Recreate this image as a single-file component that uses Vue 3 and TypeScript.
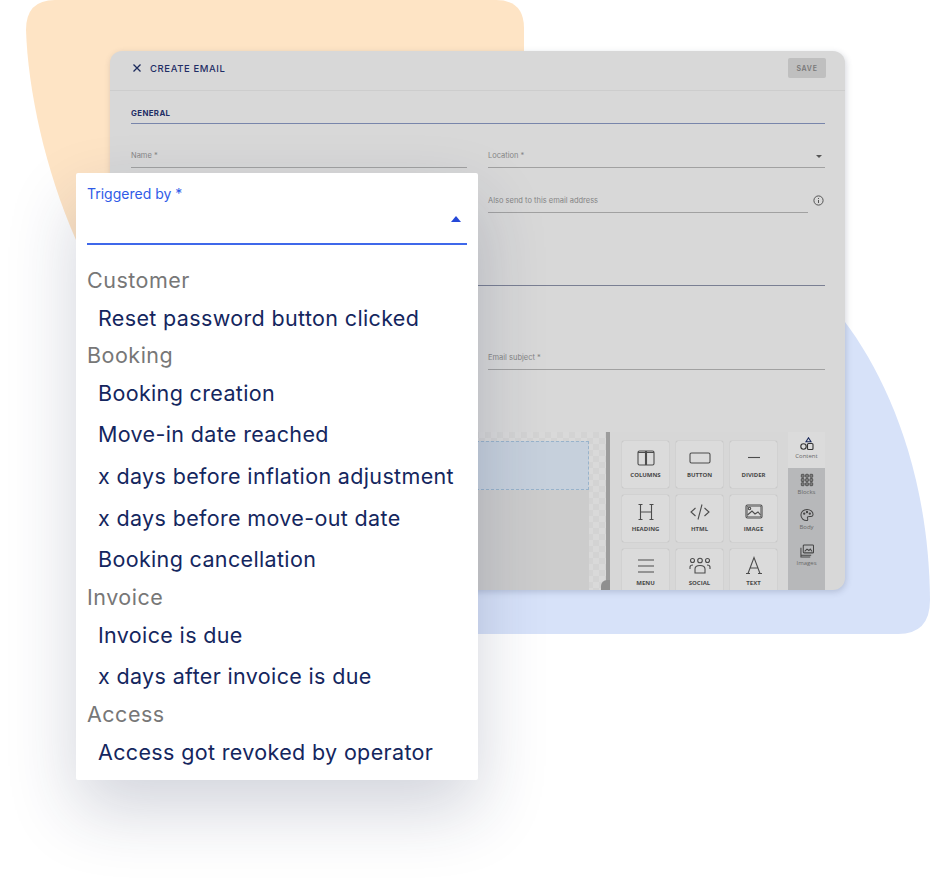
<script setup lang="ts">
const groups = [
  { name: 'Customer', items: ['Reset password button clicked'] },
  { name: 'Booking', items: ['Booking creation', 'Move-in date reached', 'x days before inflation adjustment', 'x days before move-out date', 'Booking cancellation'] },
  { name: 'Invoice', items: ['Invoice is due', 'x days after invoice is due'] },
  { name: 'Access', items: ['Access got revoked by operator'] },
]
const tools = [
  { label: 'COLUMNS', icon: 'columns' }, { label: 'BUTTON', icon: 'button' }, { label: 'DIVIDER', icon: 'divider' },
  { label: 'HEADING', icon: 'heading' }, { label: 'HTML', icon: 'html' }, { label: 'IMAGE', icon: 'image' },
  { label: 'MENU', icon: 'menu' }, { label: 'SOCIAL', icon: 'social' }, { label: 'TEXT', icon: 'text' },
]
</script>

<template>
  <div class="canvas">
    <svg class="blob" width="930" height="879" viewBox="0 0 930 879" aria-hidden="true">
      <path d="M55 0H496Q524 0 524 28V240H76C45 170 28 90 26 30Q26 0 55 0Z" fill="#FEE4C5" />
      <path d="M845 322C885 375 929 470 930 600Q930 634 898 634H470V322Z" fill="#D7E2F9" />
    </svg>

    <section class="window">
      <header class="topbar">
        <div class="title">
          <svg width="10" height="10" viewBox="0 0 10 10"><path d="M1.500 1.500L8.500 8.500M8.500 1.500L1.500 8.500" stroke="#1b2a5c" stroke-width="1.300" fill="none" /></svg>
          <span>CREATE EMAIL</span>
        </div>
        <button class="save">SAVE</button>
      </header>
      <div class="form">
        <div class="tab">GENERAL</div>
        <div class="row row-one">
          <div class="field"><span>Name *</span></div>
          <div class="field"><span>Location *</span><i class="caret"></i></div>
        </div>
        <div class="row row-two">
          <div></div>
          <div class="with-info">
            <div class="field grow"><span>Also send to this email address</span></div>
            <svg class="info" width="11" height="11" viewBox="0 0 11 11"><circle cx="5.500" cy="5.500" r="4.600" fill="none" stroke="#555" /><path d="M5.500 5V8M5.500 3V4" stroke="#555" /></svg>
          </div>
        </div>
        <div class="dark-rule"></div>
        <div class="row row-three">
          <div></div>
          <div class="field"><span>Email subject *</span></div>
        </div>
        <div class="editor">
          <div class="stage">
            <div class="page">
              <div class="selected"></div>
            </div>
          </div>
          <div class="splitter"><i class="grip"></i></div>
          <div class="tools">
            <div v-for="t in tools" :key="t.label" class="tool">
              <svg width="26" height="24" viewBox="0 0 26 24" fill="none" stroke="#4c4c4c" stroke-width="1.100">
                <template v-if="t.icon === 'columns'"><rect x="5" y="5" width="16" height="14" rx="1.500" /><path d="M12.500 5V19M13.500 5V19M5 6.500H21" /></template>
                <template v-else-if="t.icon === 'button'"><rect x="3" y="7" width="20" height="10" rx="1.500" /></template>
                <path v-else-if="t.icon === 'divider'" d="M7 11.500H19" />
                <path v-else-if="t.icon === 'heading'" d="M7.500 4.500V19.500M18.500 4.500V19.500M7.500 12H18.500M5.500 4.500H9.500M16.500 4.500H20.500M5.500 19.500H9.500M16.500 19.500H20.500" />
                <path v-else-if="t.icon === 'html'" d="M8.500 8L4 12L8.500 16M17.500 8L22 12L17.500 16M15 4.500L11 19.500" />
                <template v-else-if="t.icon === 'image'"><rect x="5" y="5" width="16" height="13" rx="1.500" /><rect x="6.200" y="6.200" width="13.600" height="10.600" stroke-width=".6" /><circle cx="8.500" cy="8.500" r="1.200" /><path d="M6.500 15L11 11L14 14L17 12L19.500 15" /></template>
                <path v-else-if="t.icon === 'menu'" d="M5 6H21M5 12H21M5 18H21" />
                <template v-else-if="t.icon === 'social'"><circle cx="13" cy="6.500" r="2.300" /><circle cx="5.500" cy="6.500" r="2" /><circle cx="20.500" cy="6.500" r="2" /><path d="M8 19V15Q8 11.500 13 11.500Q18 11.500 18 15V19ZM3 15V13Q3 11 6 11M23 15V13Q23 11 20 11" /></template>
                <path v-else d="M7 19.500L13 3.500L19 19.500M9 14H17M5 19.500H9M17 19.500H21" />
              </svg>
              <b>{{ t.label }}</b>
            </div>
          </div>
          <aside class="rail">
            <div class="rail-item current">
              <svg width="14" height="14" viewBox="0 0 14 14" fill="none" stroke="#333" stroke-width="1.100"><path d="M8.500 .8L11 4.800H6Z" stroke="#1b2a5c" /><circle cx="3.500" cy="9.500" r="2.700" /><rect x="7.500" y="6.500" width="5.500" height="6" rx="1" /></svg>
              <span>Content</span>
            </div>
            <div class="rail-item">
              <svg width="14" height="14" viewBox="0 0 14 14" fill="#808080" stroke="#3a3a3a" stroke-width=".7"><rect x="1.300" y="1.300" width="2.800" height="3" rx=".6" /><rect x="5.600" y="1.300" width="2.800" height="3" rx=".6" /><rect x="9.900" y="1.300" width="2.800" height="3" rx=".6" /><rect x="1.300" y="5.500" width="2.800" height="3" rx=".6" /><rect x="5.600" y="5.500" width="2.800" height="3" rx=".6" /><rect x="9.900" y="5.500" width="2.800" height="3" rx=".6" /><rect x="1.300" y="9.700" width="2.800" height="3" rx=".6" /><rect x="5.600" y="9.700" width="2.800" height="3" rx=".6" /><rect x="9.900" y="9.700" width="2.800" height="3" rx=".6" /></svg>
              <span>Blocks</span>
            </div>
            <div class="rail-item">
              <svg width="14" height="14" viewBox="0 0 15 15" fill="none" stroke="#444" stroke-width="1.100"><path d="M7.500 1.500C3.500 1.500 1 4.500 1 7.500C1 11 4 13.500 7 13.500C8.500 13.500 8.500 12 8 11C7.500 9.800 8.500 9 10 9H12C13.500 9 14 8 14 7C14 4 11 1.500 7.500 1.500Z" /><circle cx="4.500" cy="6" r=".7" /><circle cx="7.500" cy="4.300" r=".7" /><circle cx="10.500" cy="6" r=".7" /></svg>
              <span>Body</span>
            </div>
            <div class="rail-item">
              <svg width="14" height="14" viewBox="0 0 15 15" fill="none" stroke="#444" stroke-width="1.100"><rect x="3.500" y="1" width="11" height="8.500" rx="1" /><path d="M1 4V11.500Q1 12 1.500 12H12M1 6.500V14H11M5 8L7.500 5.500L9.500 7L11 5.500L13 8" /></svg>
              <span>Images</span>
            </div>
          </aside>
        </div>
      </div>
    </section>

    <section class="dropdown">
      <div class="control">
        <label>Triggered by *</label>
        <i class="up"></i>
      </div>
      <div class="list">
        <template v-for="g in groups" :key="g.name">
          <div class="group">{{ g.name }}</div>
          <div v-for="item in g.items" :key="item" class="item">{{ item }}</div>
        </template>
      </div>
    </section>
  </div>
</template>

<style scoped>
.canvas { position: relative; width: 930px; height: 879px; overflow: hidden; background: #fff; font-family: "Inter", "Liberation Sans", sans-serif; }
.blob { position: absolute; left: 0; top: 0; }
.window { position: absolute; left: 110px; top: 51px; width: 735px; height: 539px; display: flex; flex-direction: column; overflow: hidden; border-radius: 12px; background: #d8d8d8; box-shadow: 1px 2px 6px rgba(60, 70, 100, .22); }
.topbar { height: 40px; box-sizing: border-box; flex: none; display: flex; align-items: center; justify-content: space-between; padding: 0 19px 5px 22px; border-bottom: 1px solid #cdcdcd; }
.title { display: flex; align-items: center; gap: 8px; color: #1f2e66; font: 500 9.500px "Inter", sans-serif; letter-spacing: .6px; }
.save { width: 38px; height: 20px; padding: 0; border: 0; border-radius: 2px; background: #bfbfbf; color: #787878; font: 600 7px "Inter", sans-serif; letter-spacing: .7px; }
.form { flex: 1; min-height: 0; display: flex; flex-direction: column; padding: 0 20px 0 21px; }
.tab { height: 33px; flex: none; padding-top: 16px; box-sizing: border-box; border-bottom: 1px solid #7885ab; color: #1f2e66; font: 700 7.800px/12px "Inter", sans-serif; letter-spacing: .4px; }
.row { display: grid; grid-template-columns: 336px 337px; gap: 21px; flex: none; }
.row-one { height: 44px; align-items: end; }
.row-two { height: 45px; align-items: end; }
.field { position: relative; height: 20px; box-sizing: border-box; border-bottom: 1px solid #a1a1a1; color: #858585; font-size: 7.500px; line-height: 12px; padding-top: 2px; }
.caret { position: absolute; right: 3px; top: 7px; border: 3px solid transparent; border-top: 3px solid #555; }
.with-info { display: flex; align-items: flex-end; gap: 5px; }
.info { margin: 0 1px 7px 0; }
.grow { flex: 1; }
.dark-rule { height: 73px; flex: none; box-sizing: border-box; border-bottom: 1px solid #7a7f93; }
.row-three { height: 146px; align-items: start; }
.row-three .field { margin-top: 64px; }
.editor { flex: 1; min-height: 0; display: flex; overflow: hidden; }
.stage { flex: 1; display: flex; flex-direction: column; padding: 9px 17px 0 0; background: repeating-conic-gradient(#d3d3d3 0 25%, #d9d9d9 0 50%) 0 0 / 12px 12px; }
.page { flex: 1; background: #cccccc; }
.selected { height: 49px; box-sizing: border-box; background: #c6d0dc; border: 1px dashed #98b3cb; }
.splitter { position: relative; width: 4px; flex: none; background: #9c9c9c; }
.grip { position: absolute; right: 0; bottom: 0; width: 9px; height: 10px; border-radius: 6px 0 0 0; background: #8f8f8f; }
.tools { width: 178px; flex: none; display: grid; grid-template-columns: repeat(3, 47px); grid-auto-rows: 47px; gap: 7px; padding: 9px 0 0 12px; box-sizing: border-box; background: #d7d7d7; }
.tool { box-sizing: border-box; display: flex; flex-direction: column; align-items: center; padding-top: 5px; gap: 1px; border-radius: 2px; background: #dbdbdb; box-shadow: 0 0 1px rgba(0, 0, 0, .3); }
.tool b { color: #484848; font: 700 6px/9px "Open Sans", sans-serif; }
.rail { width: 37px; flex: none; display: flex; flex-direction: column; background: #b7b8ba; color: #686868; font: 6px/8px "Open Sans", sans-serif; }
.rail-item { height: 35.600px; flex: none; box-sizing: border-box; padding-top: 5px; display: flex; flex-direction: column; align-items: center; gap: 1px; }
.current { background: #dbdbdb; }
.dropdown { position: absolute; left: 76px; top: 173px; width: 402px; height: 607px; border-radius: 2px; background: #fff; box-shadow: 0 30px 70px rgba(30, 40, 80, .2); }
.control { position: relative; height: 72px; margin: 0 11px; border-bottom: 2px solid #3f68ea; box-sizing: border-box; }
.control label { display: block; padding-top: 12px; color: #2f5be7; font-size: 14px; line-height: 17px; }
.up { position: absolute; right: 6px; top: 43px; border: 5px solid transparent; border-bottom: 6px solid #2548d8; border-top: 0; }
.list { padding: 21px 0 0 11px; }
.group { height: 34px; color: #777; font-size: 21.500px; letter-spacing: .5px; line-height: 28px; }
.item { height: 41.800px; margin-left: 11px; color: #14265e; font-size: 21.500px; letter-spacing: .35px; line-height: 36px; white-space: nowrap; }
.group + .item { height: 41px; }
</style>
